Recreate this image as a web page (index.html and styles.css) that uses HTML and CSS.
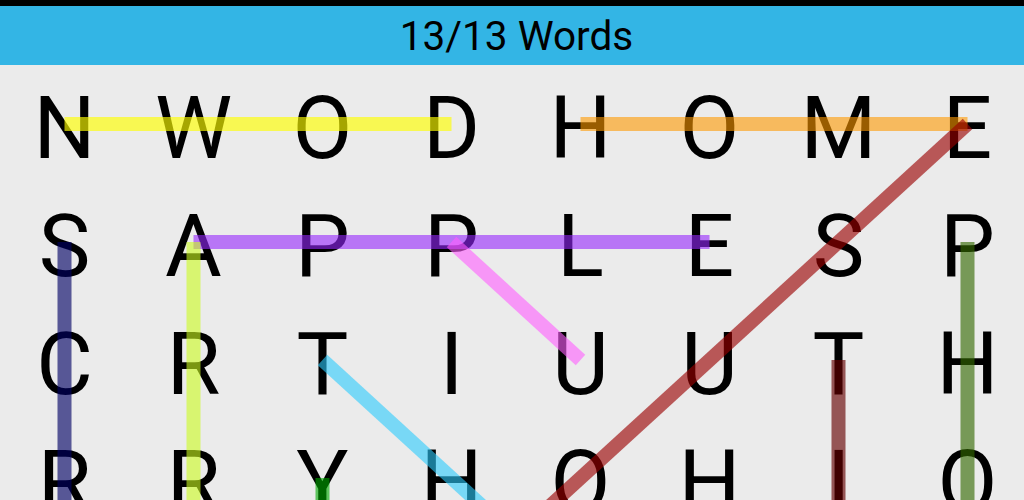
FILE: index.html
```html
<!DOCTYPE html>
<html>
<head>
<meta charset="utf-8">
<link rel="stylesheet" href="styles.css">
</head>
<body>
<div class="app">
  <div class="statusbar"></div>
  <header class="header">13/13 Words</header>
  <main class="board">
    <div class="grid">
      <span class="cell">N</span><span class="cell">W</span><span class="cell">O</span><span class="cell">D</span><span class="cell">H</span><span class="cell">O</span><span class="cell">M</span><span class="cell">E</span>
      <span class="cell">S</span><span class="cell">A</span><span class="cell">P</span><span class="cell">P</span><span class="cell">L</span><span class="cell">E</span><span class="cell">S</span><span class="cell">P</span>
      <span class="cell">C</span><span class="cell">R</span><span class="cell">T</span><span class="cell">I</span><span class="cell">U</span><span class="cell">U</span><span class="cell">T</span><span class="cell">H</span>
      <span class="cell">R</span><span class="cell">R</span><span class="cell">Y</span><span class="cell">H</span><span class="cell">O</span><span class="cell">H</span><span class="cell">I</span><span class="cell">O</span>
    </div>
    <svg class="lines" width="1032" height="435" viewBox="0 0 1032 435">
      <line x1="64.5" y1="59" x2="451.5" y2="59" stroke="rgba(255,255,0,0.65)"/>
      <line x1="580.5" y1="59" x2="967.5" y2="59" stroke="rgba(255,153,0,0.6)"/>
      <line x1="193.5" y1="177" x2="709.5" y2="177" stroke="rgba(150,38,253,0.6)"/>
      <line x1="451.5" y1="177" x2="580.5" y2="295" stroke="rgba(255,93,255,0.6)"/>
      <line x1="64.5" y1="177" x2="64.5" y2="650" stroke="rgba(0,0,100,0.63)"/>
      <line x1="193.5" y1="177" x2="193.5" y2="650" stroke="rgba(203,252,30,0.6)"/>
      <line x1="322.5" y1="295" x2="580.5" y2="531" stroke="rgba(43,203,253,0.6)"/>
      <line x1="322.5" y1="413" x2="322.5" y2="650" stroke="rgba(0,170,0,0.6)"/>
      <line x1="838.5" y1="295" x2="838.5" y2="650" stroke="rgba(100,0,0,0.64)"/>
      <line x1="967.5" y1="177" x2="967.5" y2="650" stroke="rgba(51,105,0,0.63)"/>
      <line x1="967.5" y1="59" x2="451.5" y2="531" stroke="rgba(154,0,0,0.63)"/>
    </svg>
  </main>
</div>
</body>
</html>
```
FILE: styles.css
```css
html, body {
  margin: 0;
  padding: 0;
  width: 1024px;
  height: 500px;
  overflow: hidden;
  background: #ebebeb;
  font-family: Roboto, "Liberation Sans", sans-serif;
}
.app {
  display: flex;
  flex-direction: column;
  width: 1024px;
  height: 500px;
}
.statusbar {
  height: 6px;
  background: #000;
  flex: none;
}
.header {
  height: 59px;
  flex: none;
  box-sizing: border-box;
  padding-left: 9px;
  background: #33b5e5;
  color: #000;
  font-size: 40.5px;
  display: flex;
  align-items: center;
  justify-content: center;
}
.board {
  position: relative;
  flex: 1;
  overflow: hidden;
}
.grid {
  display: grid;
  grid-template-columns: repeat(8, 129px);
  grid-auto-rows: 118px;
  width: 1032px;
}
.cell {
  display: flex;
  align-items: center;
  justify-content: center;
  box-sizing: border-box;
  padding-top: 8px;
  font-size: 87px;
  color: #000;
}
.lines {
  position: absolute;
  left: 0;
  top: 0;
  stroke-width: 14;
  stroke-linecap: butt;
}
```
